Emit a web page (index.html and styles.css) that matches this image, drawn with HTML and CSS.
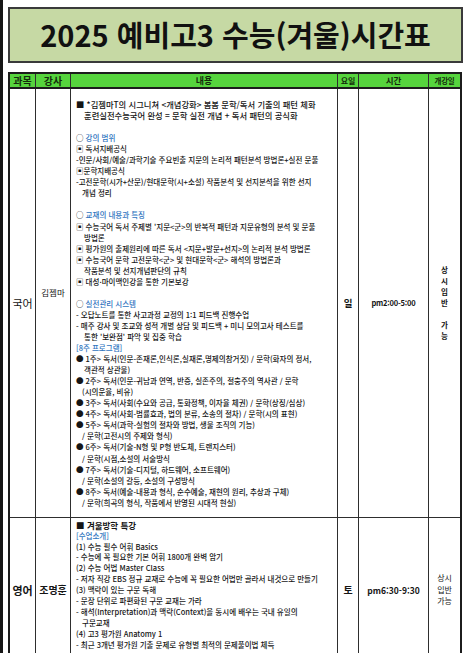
FILE: index.html
```html
<!DOCTYPE html>
<html lang="ko">
<head>
<meta charset="utf-8">
<title>2025 예비고3 수능(겨울)시간표</title>
<link rel="stylesheet" href="styles.css">
</head>
<body>
<div class="page">
  <div class="title">2025 예비고3 수능(겨울)시간표</div>
  <div class="sched">
    <div class="row head">
      <div class="cell h-subj">과목</div>
      <div class="cell h-teach">강사</div>
      <div class="cell h-cont">내용</div>
      <div class="cell h-day">요일</div>
      <div class="cell h-time">시간</div>
      <div class="cell h-start">개강일</div>
    </div>

    <div class="row body-row kor">
      <div class="cell subj">국어</div>
      <div class="cell teach teach-kor">김젬마</div>
      <div class="cell content">
        <div class="ln big">■ *김젬마T의 시그니쳐 &lt;개념강화&gt; 봄봄 문학/독서 기출의 패턴 체화</div>
        <div class="ln big ind">훈련실전수능국어 완성 = 문학 실전 개념 + 독서 패턴의 공식화</div>
        <div class="gap"></div>
        <div class="ln">○ <span class="blue">강의 범위</span></div>
        <div class="ln">▣ 독서지배공식</div>
        <div class="ln">-인문/사회/예술/과학기술 주요빈출 지문의 논리적 패턴분석 방법론+실전 문풀</div>
        <div class="ln">▣문학지배공식</div>
        <div class="ln">-고전문학(시가+산문)/현대문학(시+소설) 작품분석 및 선지분석을 위한 선지</div>
        <div class="ln ind-s">개념 정리</div>
        <div class="gap"></div>
        <div class="ln">○ <span class="blue">교재의 내용과 특징</span></div>
        <div class="ln">▣ 수능국어 독서 주제별 '지문&lt;군&gt;의 반복적 패턴과 지문유형의 분석 및 문풀</div>
        <div class="ln ind">방법론</div>
        <div class="ln">▣ 평가원의 출제원리에 따른 독서 &lt;지문+발문+선지&gt;의 논리적 분석 방법론</div>
        <div class="ln">▣ 수능국어 문학 고전문학&lt;군&gt; 및 현대문학&lt;군&gt; 해석의 방법론과</div>
        <div class="ln ind">작품분석 및 선지개념판단의 규칙</div>
        <div class="ln">▣ 대성·마이맥인강을 통한 기본보강</div>
        <div class="gap"></div>
        <div class="ln">○ <span class="blue">실전관리 시스템</span></div>
        <div class="ln">- 오답노트를 통한 사고과정 교정의 1:1 피드백 진행수업</div>
        <div class="ln">- 매주 강사 및 조교와 성적 개별 상담 및 피드백 + 미니 모의고사 테스트를</div>
        <div class="ln ind">통한 '보완점' 파악 및 집중 학습</div>
        <div class="ln blue">[8주 프로그램]</div>
        <div class="ln">● 1주&gt; 독서(인문-존재론,인식론,실재론,명제의참거짓) / 문학(화자의 정서,</div>
        <div class="ln ind">객관적 상관물)</div>
        <div class="ln">● 2주&gt; 독서(인문-귀납과 연역, 반증, 실존주의, 절충주의 역사관 / 문학</div>
        <div class="ln ind-s">(시의운율, 비유)</div>
        <div class="ln">● 3주&gt; 독서(사회(수요와 공급, 통화정책, 이자율 체권) / 문학(상징/심상)</div>
        <div class="ln">● 4주&gt; 독서(사회-범률효과, 법의 분류, 소송의 절차) / 문학(시의 표현)</div>
        <div class="ln">● 5주&gt; 독서(과학-실험의 절차와 방법, 생물 조직의 기능)</div>
        <div class="ln ind-s">/ 문학(고전시의 주제와 형식)</div>
        <div class="ln">● 6주&gt; 독서(기술-N형 및 P형 반도체, 트랜지스터)</div>
        <div class="ln ind-s">/ 문학(시점,소설의 서술방식</div>
        <div class="ln">● 7주&gt; 독서(기술-디지털, 하드웨어, 소프트웨어)</div>
        <div class="ln ind-s">/ 문학(소설의 갈등, 소설의 구성방식</div>
        <div class="ln">● 8주&gt; 독서(예술-내용과 형식, 순수예술, 재현의 원리, 추상과 구체)</div>
        <div class="ln ind-s">/ 문학(희곡의 형식, 작품에서 반영된 시대적 현실)</div>
      </div>
      <div class="cell day">일</div>
      <div class="cell time">pm2:00-5:00</div>
      <div class="cell start start-kor">
        <div>상</div><div>시</div><div>입</div><div>반</div><div class="blank"></div><div>가</div><div>능</div>
      </div>
    </div>

    <div class="row body-row eng">
      <div class="cell subj subj-eng">영어</div>
      <div class="cell teach teach-eng">조명훈</div>
      <div class="cell content content-eng">
        <div class="ln lead">■ 겨울방학 특강</div>
        <div class="ln blue">[수업소개]</div>
        <div class="ln">(1) 수능 필수 어휘 Basics</div>
        <div class="ln">- 수능에 꼭 필요한 기본 어휘 1800개 완벽 암기</div>
        <div class="ln">(2) 수능 어법 Master Class</div>
        <div class="ln">- 저자 직강 EBS 정규 교재로 수능에 꼭 필요한 어법만 골라서 내것으로 만들기</div>
        <div class="ln">(3) 맥락이 있는 구문 독해</div>
        <div class="ln">- 문장 단위로 파편화된 구문 교재는 가라</div>
        <div class="ln">- 해석(Interpretation)과 맥락(Context)을 동시에 배우는 국내 유일의</div>
        <div class="ln ind-s">구문교재</div>
        <div class="ln">(4) 고3 평가원 Anatomy 1</div>
        <div class="ln">- 최근 3개년 평가원 기출 문제로 유형별 최적의 문제풀이법 체득</div>
        <div class="gap-e"></div>
      </div>
      <div class="cell day day-eng">토</div>
      <div class="cell time time-eng">pm6:30-9:30</div>
      <div class="cell start start-eng">
        <div>상시</div><div>입반</div><div>가능</div>
      </div>
    </div>
  </div>
</div>
</body>
</html>
```

FILE: styles.css
```css
* {
  box-sizing: border-box;
}

html, body {
  margin: 0;
  padding: 0;
  background: #ffffff;
}

body {
  font-family: "Noto Sans CJK KR", "Noto Sans", sans-serif;
  color: #151515;
  overflow: hidden;
}

.page {
  border-left: 3px solid #161616;
  min-height: 653px;
  padding: 7px 0 0 5px;
}

.title {
  width: 455px;
  height: 56px;
  border: 2px solid #3a3a3a;
  background: #c6d9a4;
  color: #111111;
  font-size: 29px;
  font-weight: 700;
  line-height: 51px;
  text-align: center;
}

.sched {
  margin-top: 9px;
  width: 454px;
  border: 2px solid #1c1c1c;
  border-bottom: none;
}

.row {
  display: grid;
  grid-template-columns: 26px 35px 267px 21px 70px 31px;
}

.cell {
  border-right: 1px solid #2e2e2e;
  display: flex;
  align-items: center;
  justify-content: center;
  text-align: center;
}

.cell:last-child {
  border-right: none;
}

/* header */
.head {
  height: 15px;
  background: #56d43d;
  border-bottom: 2px solid #1c1c1c;
}

.head .cell {
  font-weight: 700;
  line-height: 13px;
  color: #142a0c;
}

.h-subj { font-size: 10px; }
.h-teach { font-size: 10px; }
.h-cont { font-size: 9px; }
.h-day { font-size: 8px; }
.h-time { font-size: 8.5px; }
.h-start { font-size: 7.5px; letter-spacing: -0.3px; }

/* body rows */
.body-row {
  border-bottom: 1px solid #2e2e2e;
}

.subj {
  font-size: 11px;
}

.teach {
  font-size: 8.5px;
}

.teach-kor {
  padding-bottom: 22px;
}

.subj-eng {
  font-size: 11px;
  font-weight: 700;
}

.teach-eng {
  font-size: 10px;
  font-weight: 700;
}

.content {
  display: block;
  text-align: left;
  padding: 10px 0 9px 5px;
  font-size: 7.5px;
  font-weight: 500;
  line-height: 11.05px;
  color: #151515;
}

.content-eng {
  padding: 2px 0 0 5px;
  line-height: 10.9px;
}

.ln {
  white-space: nowrap;
}

.big {
  font-size: 8.3px;
}

.lead {
  font-size: 8.5px;
  font-weight: 700;
}

.ind {
  padding-left: 8px;
}

.ind-s {
  padding-left: 6px;
}

.gap {
  height: 11.05px;
}

.gap-e {
  height: 10.9px;
}

.blue {
  color: #2f74c0;
}

.day {
  font-size: 9.5px;
  font-weight: 700;
}

.time {
  font-size: 7.5px;
  font-weight: 700;
  letter-spacing: -0.2px;
}

.time-eng {
  font-size: 8.5px;
  letter-spacing: 0;
}

.day-eng {
  font-size: 10px;
}

.start {
  flex-direction: column;
  font-weight: 700;
}

.start-kor {
  font-size: 7.5px;
  line-height: 11px;
}

.start-kor .blank {
  height: 11px;
}

.start-eng {
  font-size: 8px;
  font-weight: 400;
  line-height: 11.5px;
}
```
